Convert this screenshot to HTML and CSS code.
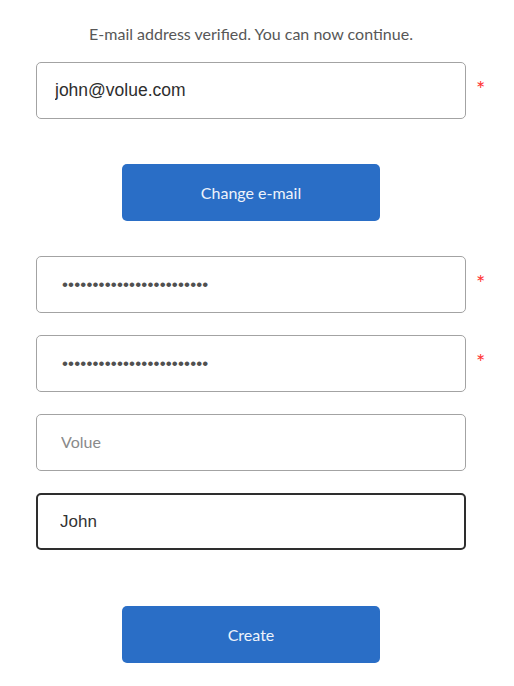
FILE: index.html
```html
<!DOCTYPE html>
<html lang="en">
<head>
<meta charset="utf-8">
<title>Create account</title>
<link rel="stylesheet" href="styles.css">
</head>
<body>
<form class="form" onsubmit="return false">
  <p class="notice">E-mail address verified. You can now continue.</p>
  <div class="row">
    <input class="field field-email" type="email" value="john@volue.com" readonly>
    <span class="req">*</span>
  </div>
  <div class="actions actions-change">
    <button class="btn" type="button">Change e-mail</button>
  </div>
  <div class="row">
    <input class="field field-pass" type="password" value="abcdefghijklmnopqrstuvwx">
    <span class="req">*</span>
  </div>
  <div class="row">
    <input class="field field-pass" type="password" value="abcdefghijklmnopqrstuvwx">
    <span class="req">*</span>
  </div>
  <div class="row">
    <input class="field" type="text" placeholder="Volue">
  </div>
  <div class="row">
    <input class="field field-focus" type="text" value="John">
  </div>
  <div class="actions actions-create">
    <button class="btn" type="submit">Create</button>
  </div>
</form>
</body>
</html>
```

FILE: styles.css
```css
html, body {
  margin: 0;
  padding: 0;
  background: #ffffff;
}

body {
  font-family: Lato, "Open Sans", sans-serif;
}

.form {
  width: 430px;
  margin: 0 0 0 36px;
  padding-top: 24px;
  display: flex;
  flex-direction: column;
}

.notice {
  margin: 0 0 18px;
  height: 20px;
  line-height: 20px;
  font-size: 16px;
  color: #575757;
  text-align: center;
}

.row {
  display: flex;
  align-items: center;
  width: 430px;
  margin-bottom: 22px;
  position: relative;
}

.field {
  box-sizing: border-box;
  flex: 0 0 430px;
  width: 430px;
  height: 57px;
  margin: 0;
  padding: 0 0 0 24px;
  border: 1px solid #a3a3a3;
  border-radius: 5px;
  background: #ffffff;
  font-family: "Liberation Sans", Arial, sans-serif;
  font-size: 17px;
  color: #333333;
  outline: none;
}

.field::placeholder {
  font-family: Lato, "Open Sans", sans-serif;
  font-size: 16px;
  color: #8a8a8a;
}

.field-email {
  padding-left: 18px;
  font-size: 17.5px;
  color: #2e2e2e;
}

.field-pass {
  padding-left: 25px;
  color: #505050;
  letter-spacing: 0.15px;
}

.field-focus {
  border: 2px solid #2e2e2e;
  padding-left: 22px;
}

.req {
  position: absolute;
  left: 440px;
  top: 16px;
  font-family: Lato, sans-serif;
  font-size: 22px;
  line-height: 22px;
  color: #ff3535;
}

.actions {
  display: flex;
  justify-content: center;
}

.actions-change {
  margin: 23px 0 35px;
}

.actions-create {
  margin-top: 34px;
}

.btn {
  width: 258px;
  height: 57px;
  border: none;
  border-radius: 5px;
  background: #2a6ec6;
  color: #eef3fb;
  font-family: Lato, "Open Sans", sans-serif;
  font-size: 16px;
  cursor: pointer;
}
```
